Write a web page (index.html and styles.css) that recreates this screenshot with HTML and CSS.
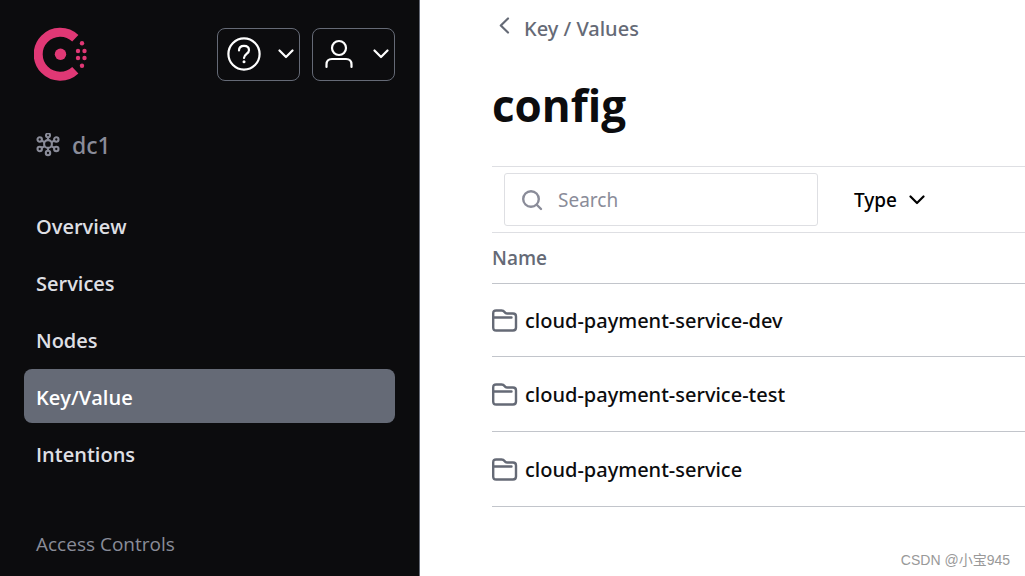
FILE: index.html
```html
<!DOCTYPE html>
<html lang="en">
<head>
    <meta charset="UTF-8">
    <meta name="viewport" content="width=device-width, initial-scale=1">
    <title>config - Key / Values</title>
    <link rel="stylesheet" href="styles.css">
</head>
<body>
<div class="app">
    <aside class="sidebar">
        <header class="topbar">
            <a class="logo" href="#" aria-label="Consul">
                <svg width="54" height="54" viewBox="0 0 54 54" fill="#e03875">
                    <path d="M41.300 11.200A22 22 0 1 0 41.300 43.200" fill="none" stroke="#e03875" stroke-width="9"/>
                    <circle cx="26.500" cy="27.300" r="5.700"/>
                    <circle cx="48" cy="16.300" r="2.200"/>
                    <circle cx="44" cy="24" r="2.200"/>
                    <circle cx="50.500" cy="24" r="2.200"/>
                    <circle cx="44" cy="31" r="2.200"/>
                    <circle cx="50.500" cy="31" r="2.200"/>
                    <circle cx="48" cy="38.700" r="2.200"/>
                </svg>
            </a>
            <button class="menu-button" type="button" aria-label="Help">
                <svg width="34" height="34" viewBox="0 0 34 34" class="line">
                    <circle cx="17" cy="17" r="15.600"/>
                    <path d="M12 13.500C12 10.500 14 8.800 17 8.800s5 1.800 5 4.400c0 3.800-5 3.600-5 7.800"/>
                    <circle cx="17" cy="24.700" r="1.500" class="dot"/>
                </svg>
                <svg width="16" height="10" viewBox="0 0 16 10" class="line"><path d="M1.500 1.500L8 8l6.500-6.500"/></svg>
            </button>
            <button class="menu-button" type="button" aria-label="Account">
                <svg width="34" height="34" viewBox="0 0 34 34" class="line">
                    <circle cx="17" cy="11" r="7"/>
                    <path d="M4.500 30V27.500q0-5.500 5.500-5.500h14q5.500 0 5.500 5.500V30"/>
                </svg>
                <svg width="16" height="10" viewBox="0 0 16 10" class="line"><path d="M1.500 1.500L8 8l6.500-6.500"/></svg>
            </button>
        </header>

        <div class="datacenter">
            <svg width="24" height="24" viewBox="0 0 24 24" fill="none" stroke="#8a8c99" stroke-width="2.100">
                <circle cx="12" cy="11" r="3.900"/>
                <circle cx="12" cy="2.300" r="2"/>
                <circle cx="12" cy="20" r="2.200"/>
                <circle cx="3.700" cy="6.500" r="2.200"/>
                <circle cx="20.300" cy="6.500" r="2.200"/>
                <circle cx="3.700" cy="16" r="2.200"/>
                <circle cx="20.300" cy="16" r="2.200"/>
                <path d="M12 4.500v3M12 14.800v3M5.700 7.600l3 1.600M18.300 7.600l-3 1.600M5.700 14.800l3-1.700M18.300 14.800l-3-1.700"/>
            </svg>
            <span>dc1</span>
        </div>

        <nav class="nav">
            <a href="#">Overview</a>
            <a href="#">Services</a>
            <a href="#">Nodes</a>
            <a href="#" class="active" aria-current="page">Key/Value</a>
            <a href="#">Intentions</a>
        </nav>
        <div class="nav-title">Access Controls</div>
    </aside>

    <main class="content">
        <a class="breadcrumb" href="#">
            <svg width="24" height="24" viewBox="0 0 24 24" fill="none" stroke="#656a76" stroke-width="2.200"><path d="M16 1.500L8.800 8.500l7.200 7" stroke-linecap="round" stroke-linejoin="round"/></svg>
            <span>Key / Values</span>
        </a>
        <h1>config</h1>

        <form class="filter-bar">
            <label class="search">
                <svg width="22" height="22" viewBox="0 0 22 22" fill="none" stroke="#8a8c99" stroke-width="2.400" stroke-linecap="round"><circle cx="9" cy="10" r="7.800"/><path d="M15 16l4 4"/></svg>
                <input type="search" placeholder="Search" aria-label="Search">
            </label>
            <button class="type-button" type="button">
                Type
                <svg width="16" height="10" viewBox="0 0 16 10" class="line"><path d="M1.500 1.500L8 8l6.500-6.500"/></svg>
            </button>
        </form>

        <table class="keys">
            <thead>
                <tr><th scope="col">Name</th></tr>
            </thead>
            <tbody>
                <tr><td><a href="#"><svg class="folder" viewBox="0 0 26 24"><path d="M1.200 18.500v-14q0-3 3-3H9.500q2 0 3 1.500t2.500 1.500h6q3 0 3 3v11q0 3-3 3h-16.800q-3 0-3-3zM1.200 8.500H19.500"/></svg>cloud-payment-service-dev</a></td></tr>
                <tr><td><a href="#"><svg class="folder" viewBox="0 0 26 24"><path d="M1.200 18.500v-14q0-3 3-3H9.500q2 0 3 1.500t2.500 1.500h6q3 0 3 3v11q0 3-3 3h-16.800q-3 0-3-3zM1.200 8.500H19.500"/></svg>cloud-payment-service-test</a></td></tr>
                <tr><td><a href="#"><svg class="folder" viewBox="0 0 26 24"><path d="M1.200 18.500v-14q0-3 3-3H9.500q2 0 3 1.500t2.500 1.500h6q3 0 3 3v11q0 3-3 3h-16.800q-3 0-3-3zM1.200 8.500H19.500"/></svg>cloud-payment-service</a></td></tr>
            </tbody>
        </table>
    </main>
</div>
<div class="watermark">CSDN @小宝945</div>
</body>
</html>
```
FILE: styles.css
```css
* {
    box-sizing: border-box;
}

body {
    margin: 0;
    background: #fff;
    color: #0c0c0e;
    font-family: "Noto Sans", "Open Sans", sans-serif;
    font-size: 20px;
    line-height: 28px;
}

a {
    color: inherit;
    text-decoration: none;
}

button {
    background: none;
    border: 0;
    color: inherit;
    font: inherit;
    cursor: pointer;
}

.line {
    fill: none;
    stroke: currentColor;
    stroke-width: 2.2;
    stroke-linecap: round;
    stroke-linejoin: round;
}

.line .dot {
    fill: currentColor;
    stroke: none;
}

.app {
    display: flex;
    min-height: 100vh;
}

.sidebar {
    flex: 0 0 420px;
    padding: 27px 24px 0;
    border-right: 1px solid #656a76;
    background: #0c0c0e;
    color: #dedfe3;
}

.topbar {
    display: flex;
    align-items: center;
    gap: 12px;
}

.logo {
    display: flex;
    margin-right: auto;
    padding-left: 10px;
}

.menu-button {
    display: flex;
    align-items: center;
    justify-content: space-between;
    width: 83px;
    height: 53px;
    padding: 0 5px 0 9px;
    border: 1px solid #656a76;
    border-radius: 8px;
    color: #fff;
}

.datacenter {
    display: flex;
    align-items: center;
    gap: 12px;
    margin: 48px 12px 0;
    height: 32px;
    color: #8a8c99;
    font-size: 23px;
    font-weight: 500;
}

.nav {
    display: flex;
    flex-direction: column;
    gap: 3px;
    margin-top: 37px;
    font-family: "Open Sans", "Noto Sans", sans-serif;
    font-weight: 600;
}

.nav a {
    padding: 15px 12px 11px;
    border-radius: 8px;
}

.nav .active {
    background: #656a76;
    color: #fff;
}

.nav-title {
    margin: 50px 12px 0;
    color: #8a8c99;
    font-family: "Open Sans", "Noto Sans", sans-serif;
    font-size: 19px;
    font-weight: 500;
}

.content {
    flex: 1;
    padding: 15px 0 0 72px;
}

.breadcrumb {
    display: flex;
    align-items: center;
    gap: 8px;
    color: #656a76;
    font-weight: 500;
}

h1 {
    margin: 32px 0 31px;
    font-family: "Open Sans", "Noto Sans", sans-serif;
    font-size: 44px;
    font-weight: 700;
    line-height: 60px;
}

.filter-bar {
    display: flex;
    align-items: center;
    gap: 36px;
    padding: 6px 12px;
    border: solid #dedfe3;
    border-width: 1px 0;
}

.search {
    display: flex;
    align-items: center;
    gap: 14px;
    width: 314px;
    height: 53px;
    padding: 0 17px;
    border: 1px solid #dedfe3;
    border-radius: 3px;
}

.search input {
    flex: 1;
    min-width: 0;
    padding: 0;
    border: 0;
    outline: 0;
    background: none;
    font: inherit;
    font-size: 19px;
}

.search input::placeholder {
    color: #8a8c99;
}

.type-button {
    display: flex;
    align-items: center;
    gap: 12px;
    padding: 0;
    color: #000;
    font-size: 19px;
    font-weight: 500;
}

.keys {
    width: 100%;
    border-collapse: collapse;
}

.keys th,
.keys td {
    padding: 0;
    border-bottom: 1px solid #c2c5cb;
    text-align: left;
}

.keys th {
    height: 50px;
    color: #656a76;
    font-family: "Open Sans", "Noto Sans", sans-serif;
    font-size: 19px;
    font-weight: 600;
}

.keys td {
    height: 75px;
    padding-top: 2px;
    font-weight: 500;
}

.keys tbody tr:first-child td {
    height: 73px;
}

.keys td a {
    display: flex;
    align-items: center;
    gap: 7px;
}

.folder {
    width: 26px;
    height: 24px;
    fill: none;
    stroke: #656a76;
    stroke-width: 2.4;
    stroke-linecap: round;
    stroke-linejoin: round;
}

.watermark {
    position: absolute;
    right: 15px;
    bottom: 6px;
    color: #999;
    font-family: "Liberation Sans", "Noto Sans CJK SC", sans-serif;
    font-size: 14px;
    line-height: 20px;
}
```
